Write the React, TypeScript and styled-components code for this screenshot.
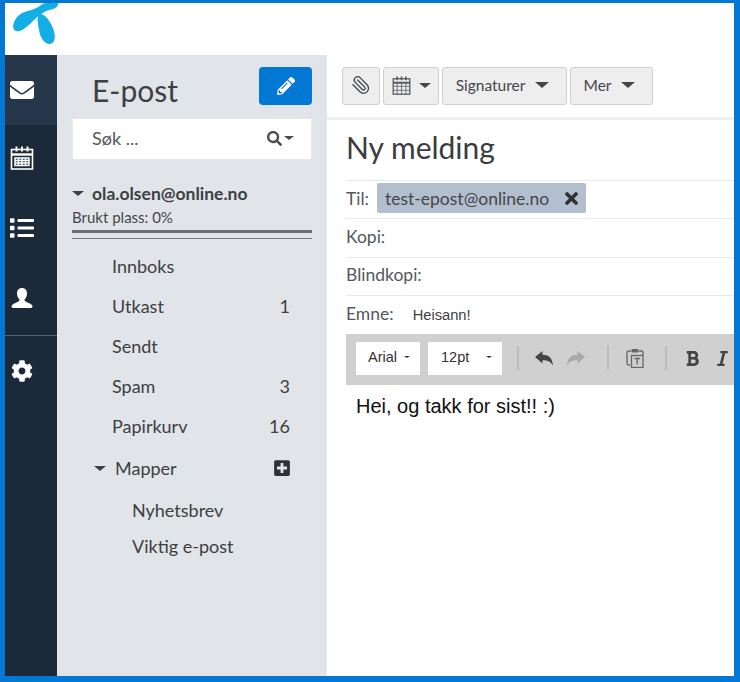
import * as React from 'react';
import styled, { createGlobalStyle } from 'styled-components';
import { Paperclip } from 'lucide-react';
import {
  FaCog,
  FaEnvelope,
  FaItalic,
  FaBold,
  FaList,
  FaPencilAlt,
  FaPlusSquare,
  FaSearch,
} from 'react-icons/fa';

const GlobalStyle = createGlobalStyle`
  html, body {
    margin: 0;
    padding: 0;
    background: #fff;
  }
  * {
    box-sizing: border-box;
  }
`;

const Frame = styled.div`
  width: 740px;
  height: 682px;
  overflow: hidden;
  display: flex;
  flex-direction: column;
  border-style: solid;
  border-color: #0277d4;
  border-width: 3px 6px 6px 5px;
  font-family: Lato, "Open Sans", sans-serif;
  color: #3d3f42;
  background: #fff;
`;

const Header = styled.div`
  height: 52px;
  flex: none;
  padding-left: 7px;
  background: #fff;
`;

const Body = styled.div`
  flex: 1;
  display: flex;
  min-height: 0;
`;

const Rail = styled.nav`
  width: 52px;
  flex: none;
  background: #1c2938;
`;

const RailItem = styled.div<{ $active?: boolean; $lift?: number }>`
  height: 70px;
  display: flex;
  align-items: center;
  justify-content: center;
  padding-right: 18px;
  padding-bottom: ${p => p.$lift ?? 0}px;
  color: #fff;
  font-size: 24px;
  background: ${p => (p.$active ? '#26364b' : 'transparent')};
`;

const RailDivider = styled.div`
  height: 1px;
  background: #55606c;
`;

const Panel = styled.aside`
  width: 270px;
  flex: none;
  padding: 12px 15px 0;
  background: #e1e4e8;
`;

const PanelHead = styled.div`
  height: 38px;
  display: flex;
  align-items: center;
  justify-content: space-between;
`;

const PanelTitle = styled.h1`
  margin: 8px 0 0 20px;
  font-size: 30px;
  font-weight: 400;
  line-height: 38px;
`;

const ComposeButton = styled.div`
  width: 53px;
  height: 38px;
  display: flex;
  align-items: center;
  justify-content: center;
  border-radius: 4px;
  color: #fff;
  font-size: 18px;
  background: #0277d4;
`;

const SearchBox = styled.div`
  height: 42px;
  margin-top: 13px;
  display: flex;
  align-items: center;
  justify-content: space-between;
  padding: 0 17px 2px 19px;
  font-size: 18px;
  color: #55585c;
  background: #fff;
  border: 1px solid #e8e8e8;
`;

const SearchIcon = styled.span`
  display: flex;
  align-items: center;
  gap: 2px;
  font-size: 15px;
  color: #4a4c50;
`;

const Caret = styled.span<{ $size?: number }>`
  display: inline-block;
  width: 0;
  height: 0;
  border-style: solid;
  border-color: currentColor transparent transparent;
  border-width: ${p => p.$size ?? 5}px ${p => (p.$size ?? 5) + 1}px 0;
`;

const Account = styled.div`
  margin-top: 22px;
  display: flex;
  align-items: center;
  gap: 8px;
  height: 22px;
  font-size: 17.5px;
  font-weight: 700;
  color: #3d3f42;
`;

const Quota = styled.div`
  margin-top: 4px;
  height: 19px;
  font-size: 15px;
  line-height: 19px;
  color: #44474a;
`;

const QuotaBar = styled.div`
  height: 9px;
  margin-top: 3px;
  border-top: 3px solid #6d6e71;
  border-bottom: 1px solid #77787b;
`;

const FolderList = styled.ul`
  list-style: none;
  margin: 7px 0 0;
  padding: 0 22px 0 40px;
`;

const Folder = styled.li`
  height: 40px;
  display: flex;
  align-items: center;
  justify-content: space-between;
  font-size: 18px;
`;

const MapperRow = styled.div`
  height: 44px;
  display: flex;
  align-items: center;
  margin: 0 21px 0 22px;
  font-size: 18px;
`;

const MapperLabel = styled.span`
  flex: 1;
  margin-left: 9px;
`;

const PlusIcon = styled.span`
  display: flex;
  font-size: 18px;
  color: #2f3135;
`;

const SubList = styled.ul`
  list-style: none;
  margin: 2px 0 0;
  padding: 0 0 0 60px;
`;

const SubFolder = styled.li`
  height: 36px;
  display: flex;
  align-items: center;
  font-size: 18px;
`;

const Main = styled.main`
  flex: 1;
  min-width: 0;
  overflow: hidden;
  background: #fff;
`;

const Toolbar = styled.div`
  height: 65px;
  display: flex;
  gap: 3px;
  padding: 12px 0 0 15px;
  border-bottom: 3px solid #eeeff0;
`;

const ToolButton = styled.div<{ $width: number }>`
  width: ${p => p.$width}px;
  height: 38px;
  display: flex;
  align-items: center;
  justify-content: center;
  gap: ${p => (p.$width > 60 ? 10 : 8)}px;
  padding: 0 ${p => (p.$width > 60 ? 4 : 0)}px 2px 0;
  font-size: 15.5px;
  color: #44474a;
  background: #eeeeee;
  border: 1px solid #cfcfcf;
  border-radius: 3px;
`;

const Compose = styled.div`
  padding-left: 19px;
`;

const ComposeTitle = styled.h2`
  margin: 0;
  height: 60px;
  display: flex;
  align-items: center;
  padding-bottom: 6px;
  font-size: 30px;
  font-weight: 400;
  color: #3a3c40;
`;

const FieldRow = styled.div<{ $height?: number }>`
  height: ${p => p.$height ?? 38.3}px;
  display: flex;
  align-items: center;
  padding-bottom: ${p => (p.$height ? 2 : 3)}px;
  border-top: 1px solid #e8e9ea;
  font-size: 17.5px;
  color: #55585c;
`;

const Chip = styled.span`
  height: 30px;
  margin-left: 8px;
  padding: 0 8px;
  display: flex;
  align-items: center;
  gap: 16px;
  font-size: 17.5px;
  color: #44474a;
  background: #b3bfce;
  border-radius: 2px;
`;

const SubjectValue = styled.span`
  margin-left: 19px;
  margin-top: 3px;
  font-family: "Liberation Sans", Arial, sans-serif;
  font-size: 14.7px;
  color: #3d3f42;
`;

const EditorBar = styled.div`
  height: 51px;
  display: flex;
  align-items: center;
  padding: 0 0 2px 10px;
  background: #d0d0d0;
  white-space: nowrap;
`;

const SelectBox = styled.div<{ $width: number; $left: number }>`
  flex: none;
  width: ${p => p.$width}px;
  height: 33px;
  margin-right: 8px;
  padding: 0 10px 2px ${p => p.$left}px;
  display: flex;
  align-items: center;
  justify-content: space-between;
  font-family: "Liberation Sans", Arial, sans-serif;
  font-size: 14.5px;
  color: #333;
  background: #fff;
`;

const BarDivider = styled.span<{ $left: number; $right: number }>`
  flex: none;
  width: 2px;
  height: 24px;
  margin: 0 ${p => p.$right}px 0 ${p => p.$left}px;
  background: #bcbcbc;
`;

const EditorIcon = styled.span<{ $muted?: boolean; $gap?: number }>`
  flex: none;
  display: flex;
  margin-right: ${p => p.$gap ?? 0}px;
  font-size: 17px;
  color: ${p => (p.$muted ? '#a9a9a9' : '#444')};
`;

const Message = styled.div`
  padding: 9px 10px;
  font-family: "Liberation Sans", Arial, sans-serif;
  font-size: 20px;
  line-height: 24px;
  color: #111;
`;

const Logo = () => (
  <svg width="52" height="44" viewBox="0 0 52 44" style={{ display: 'block' }}>
    <path
      d="M46 0 C47 3 43 6 37 7 C31 9 27 12 22 17 C17 22 9 30 4 28 C-1 26 1 18 6 13 C10 9 16 8 22 6 C28 4 30 0 34 0 Z"
      fill="#14aee6"
    />
    <path
      d="M28 11 C33 11 37 17 40 23 C44 31 44 40 38 41 C32 41 28 34 27 27 C26 21 24 12 28 11 Z"
      fill="#14aee6"
    />
  </svg>
);

const CalendarIcon = ({ size, color, dense }: { size: number; color: string; dense?: boolean }) => (
  <svg width={size} height={size} viewBox="0 0 24 24" fill="none" stroke={color}>
    <rect x="1.5" y="3.5" width="21" height="19.5" strokeWidth="1.6" />
    <path d="M1.5 8.5h21" strokeWidth="2.4" />
    <path d="M6.5 0.5v5M12 0.5v5M17.5 0.5v5" strokeWidth="2" />
    {dense ? (
      <path d="M5 12h14v7.5H5zM5 14.5h14M5 17h14M8.5 12v7.5M12 12v7.5M15.5 12v7.5" strokeWidth="1.5" />
    ) : (
      <path d="M1.5 13h21M1.5 18h21M6.5 8.5V23M12 8.5V23M17.5 8.5V23" strokeWidth="1" />
    )}
  </svg>
);

const UserIcon = () => (
  <svg width="22" height="20" viewBox="0 0 22 20" fill="#fff">
    <path d="M11 0c3 0 5 2.200 5 5.500 0 2.500-1 4.500-2.500 6 0 1.500 1 2 3 3 2.500 1 4.500 2 5 3.500 0 1-.5 2-1.500 2H2c-1 0-1.500-1-1.500-2 .5-1.500 2.500-2.500 5-3.500 2-1 3-1.500 3-3C7 10 6 8 6 5.500 6 2.200 8 0 11 0z" />
  </svg>
);

const CloseIcon = () => (
  <svg width="13" height="13" viewBox="0 0 13 13" stroke="#2f3135" strokeWidth="3.6" strokeLinecap="round">
    <path d="M2 2l9 9M11 2l-9 9" />
  </svg>
);

const ArrowIcon = ({ flip, color }: { flip?: boolean; color: string }) => (
  <svg width="18" height="15" viewBox="0 0 18 15" fill={color} style={flip ? { transform: 'scaleX(-1)' } : undefined}>
    <path d="M0 6L7.500 0v3.800c6 0 10 3 10.500 11-2-4-5-5.500-10.500-5.500V12.500z" />
  </svg>
);

const PasteIcon = () => (
  <svg width="18" height="20" viewBox="0 0 18 20" fill="none" stroke="#666">
    <path d="M5 3H2.500C1.500 3 1 3.500 1 4.500v11c0 1 .5 1.500 1.500 1.500H4" strokeWidth="1.3" />
    <path d="M13 3h2.500c1 0 1.500.5 1.500 1.500V7" strokeWidth="1.3" />
    <rect x="5.500" y="1" width="7" height="3.500" rx="1" fill="#666" stroke="none" />
    <rect x="5.500" y="7.500" width="11.500" height="12" strokeWidth="1.3" />
    <path d="M8.500 10.500h5.500M11.200 10.500v6" strokeWidth="1.4" />
  </svg>
);

const folders = [
  { name: 'Innboks' },
  { name: 'Utkast', count: 1 },
  { name: 'Sendt' },
  { name: 'Spam', count: 3 },
  { name: 'Papirkurv', count: 16 },
];

export default function App() {
  return (
    <Frame>
      <GlobalStyle />
      <Header>
        <Logo />
      </Header>
      <Body>
        <Rail>
          <RailItem $active><FaEnvelope /></RailItem>
          <RailItem $lift={4}><CalendarIcon size={24} color="#fff" dense /></RailItem>
          <RailItem $lift={4}><FaList /></RailItem>
          <RailItem $lift={5}><UserIcon /></RailItem>
          <RailDivider />
          <RailItem><FaCog style={{ fontSize: 22 }} /></RailItem>
        </Rail>
        <Panel>
          <PanelHead>
            <PanelTitle>E-post</PanelTitle>
            <ComposeButton><FaPencilAlt /></ComposeButton>
          </PanelHead>
          <SearchBox>
            Søk ...
            <SearchIcon><FaSearch /><Caret $size={4} /></SearchIcon>
          </SearchBox>
          <Account><Caret />ola.olsen@online.no</Account>
          <Quota>Brukt plass: 0%</Quota>
          <QuotaBar />
          <FolderList>
            {folders.map(f => (
              <Folder key={f.name}>
                <span>{f.name}</span>
                {f.count ? <span>{f.count}</span> : null}
              </Folder>
            ))}
          </FolderList>
          <MapperRow>
            <Caret />
            <MapperLabel>Mapper</MapperLabel>
            <PlusIcon><FaPlusSquare /></PlusIcon>
          </MapperRow>
          <SubList>
            <SubFolder>Nyhetsbrev</SubFolder>
            <SubFolder>Viktig e-post</SubFolder>
          </SubList>
        </Panel>
        <Main>
          <Toolbar>
            <ToolButton $width={38}><Paperclip size={20} strokeWidth={1.6} style={{ transform: 'scaleX(-1)' }} /></ToolButton>
            <ToolButton $width={56}><CalendarIcon size={19} color="#55585c" /><Caret $size={5} /></ToolButton>
            <ToolButton $width={125}>Signaturer<Caret $size={6} /></ToolButton>
            <ToolButton $width={83}>Mer<Caret $size={6} /></ToolButton>
          </Toolbar>
          <Compose>
            <ComposeTitle>Ny melding</ComposeTitle>
            <FieldRow>
              Til:
              <Chip>test-epost@online.no<CloseIcon /></Chip>
            </FieldRow>
            <FieldRow>Kopi:</FieldRow>
            <FieldRow>Blindkopi:</FieldRow>
            <FieldRow $height={39.1}>
              Emne:
              <SubjectValue>Heisann!</SubjectValue>
            </FieldRow>
            <EditorBar>
              <SelectBox $width={64} $left={12}>Arial<Caret $size={2} /></SelectBox>
              <SelectBox $width={74} $left={13}>12pt<Caret $size={2} /></SelectBox>
              <BarDivider $left={7} $right={16} />
              <EditorIcon $gap={14}><ArrowIcon color="#444" /></EditorIcon>
              <EditorIcon $muted><ArrowIcon flip color="#a9a9a9" /></EditorIcon>
              <BarDivider $left={22} $right={17} />
              <EditorIcon><PasteIcon /></EditorIcon>
              <BarDivider $left={21} $right={17} />
              <EditorIcon $gap={13}><FaBold /></EditorIcon>
              <EditorIcon><FaItalic /></EditorIcon>
            </EditorBar>
            <Message>Hei, og takk for sist!! :)</Message>
          </Compose>
        </Main>
      </Body>
    </Frame>
  );
}
